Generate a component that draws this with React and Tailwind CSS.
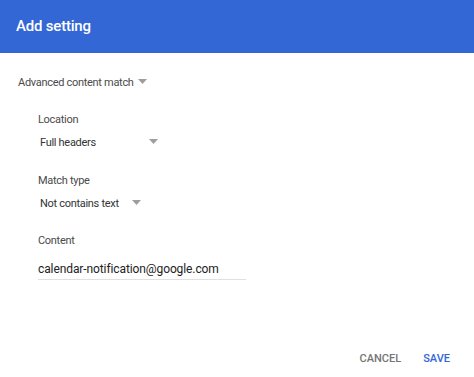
import React from "react";

function Caret({ className = "" }) {
  return (
    <svg width="9" height="5" viewBox="0 0 9 5" className={className}>
      <path d="M0 0 L9 0 L4.5 5 Z" fill="#9e9e9e" />
    </svg>
  );
}

export default function App() {
  return (
    <div
      className="w-[474px] h-[377px] bg-white flex flex-col overflow-hidden"
      style={{ fontFamily: "Roboto, 'Liberation Sans', sans-serif" }}
    >
      <div className="h-[53px] bg-[#3367d6] flex items-center pl-[16px] shrink-0">
        <span className="text-white text-[15px] font-medium tracking-[-0.2px]">Add setting</span>
      </div>
      <div className="flex-1 flex flex-col pl-[18px] pt-[22px]">
        <div className="flex items-center h-[16px] text-[11px] tracking-[-0.3px] text-[#4a4a4a]">
          <span>Advanced content match</span>
          <Caret className="ml-[4px] mt-[-3px]" />
        </div>
        <div className="flex flex-col pl-[20px] pt-[21px]">
          <div className="h-[16px] flex items-center text-[11px] tracking-[-0.3px] text-[#4a4a4a]">Location</div>
          <div className="h-[16px] mt-[7px] pl-[2px] flex items-center text-[11px] tracking-[-0.3px] text-[#333]">
            <span className="w-[109px]">Full headers</span>
            <Caret className="mt-[-3px]" />
          </div>
          <div className="h-[16px] mt-[22px] flex items-center text-[11px] tracking-[-0.3px] text-[#4a4a4a]">Match type</div>
          <div className="h-[16px] mt-[7px] pl-[2px] flex items-center text-[11px] tracking-[-0.3px] text-[#333]">
            <span className="w-[92px]">Not contains text</span>
            <Caret className="mt-[-3px]" />
          </div>
          <div className="h-[16px] mt-[21px] flex items-center text-[11px] tracking-[-0.3px] text-[#4a4a4a]">Content</div>
          <div className="w-[208px] mt-[12px] border-b border-[#e0e0e0] pb-[1px] text-[12px] tracking-[-0.1px] text-[#222] leading-[17px]">
            calendar-notification@google.com
          </div>
        </div>
      </div>
      <div className="h-[26px] flex items-start justify-end pr-[24px] gap-[22px] text-[11px] font-medium shrink-0">
        <span className="text-[#757575]">CANCEL</span>
        <span className="text-[#3367d6]">SAVE</span>
      </div>
    </div>
  );
}
